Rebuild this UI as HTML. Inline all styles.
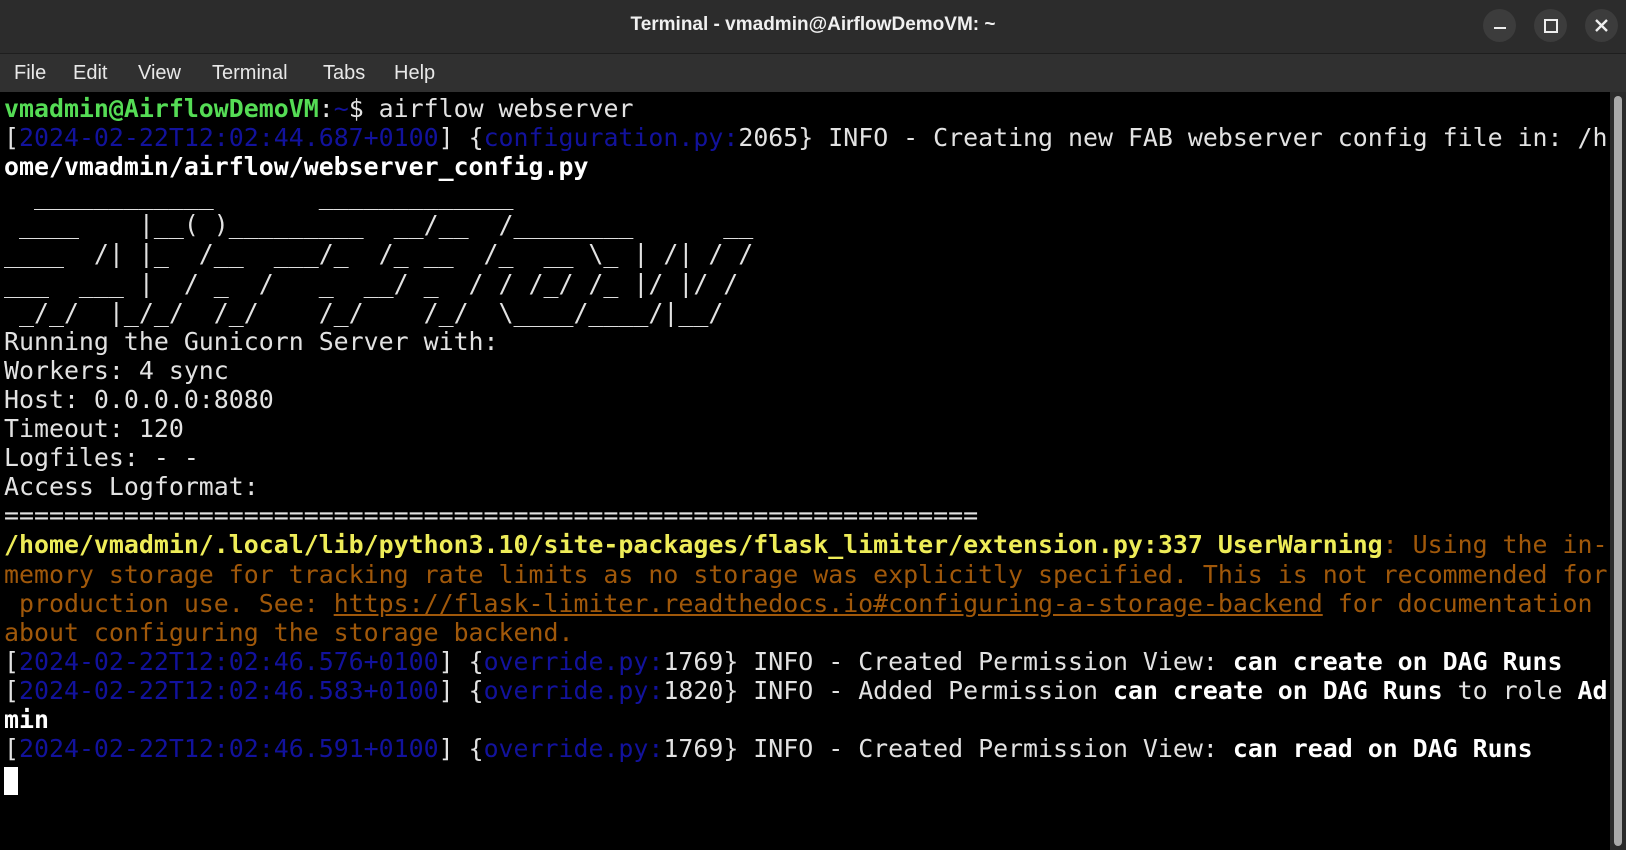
<!DOCTYPE html>
<html><head><meta charset="utf-8"><style>
html,body{margin:0;padding:0;width:1626px;height:850px;overflow:hidden;background:#000;}
.title{position:absolute;left:0;top:0;width:1626px;height:53px;background:#2c2c2c;border-bottom:1px solid #1e1e1e;}
.title .t{position:absolute;left:0;width:1626px;top:14px;text-align:center;color:#f0f0f0;font:bold 19px "Liberation Sans",sans-serif;}
.btn{position:absolute;top:9px;width:33px;height:33px;border-radius:50%;background:#3c3c3c;}
.menu{position:absolute;left:0;top:54px;width:1626px;height:38px;background:#303030;color:#e8e8e8;font:20px "Liberation Sans",sans-serif;}
.menu span{position:absolute;top:8px;}
.term{position:absolute;left:4px;top:94px;font-family:"DejaVu Sans Mono","Liberation Mono",monospace;font-size:24.9px;line-height:29.1px;color:#e2e2e2;white-space:pre;}
.g{color:#55dc55;font-weight:bold}.b{color:#12129c}.y{color:#eeec58;font-weight:bold}.o{color:#a0580a}.w{font-weight:bold;color:#fff}
.u{text-decoration:underline}
.sb{position:absolute;left:1610px;top:92px;width:16px;height:758px;background:#2a2a2a;}
.sb div{position:absolute;left:4px;top:4px;width:8px;height:750px;border-radius:4px;background:#a8a8a8;}
.cur{position:absolute;left:4px;top:767px;width:14px;height:28px;background:#fff;}
</style></head><body>
<div class="title"><div class="t">Terminal - vmadmin@AirflowDemoVM: ~</div>
<div class="btn" style="left:1483px"><div style="position:absolute;left:11px;top:18px;width:12px;height:2px;background:#eee"></div></div>
<div class="btn" style="left:1534px"><div style="position:absolute;left:10px;top:10px;width:10px;height:10px;border:2px solid #eee"></div></div>
<div class="btn" style="left:1585px"><svg width="33" height="33" style="position:absolute;left:0;top:0"><path d="M11 11L22 22M22 11L11 22" stroke="#eee" stroke-width="2.4"/></svg></div>
</div>
<div class="menu"><span style="left:14px">File</span><span style="left:73px">Edit</span><span style="left:138px">View</span><span style="left:212px">Terminal</span><span style="left:323px">Tabs</span><span style="left:394px">Help</span></div>
<div class="term"><span class="g">vmadmin@AirflowDemoVM</span>:<span class="b">~</span>$ airflow webserver
[<span class="b">2024-02-22T12:02:44.687+0100</span>] {<span class="b">configuration.py:</span>2065} INFO - Creating new FAB webserver config file in: /h
<span class="w">ome/vmadmin/airflow/webserver_config.py</span>
  ____________       _____________
 ____    |__( )_________  __/__  /________      __
____  /| |_  /__  ___/_  /_ __  /_  __ \_ | /| / /
___  ___ |  / _  /   _  __/ _  / / /_/ /_ |/ |/ /
 _/_/  |_/_/  /_/    /_/    /_/  \____/____/|__/
Running the Gunicorn Server with:
Workers: 4 sync
Host: 0.0.0.0:8080
Timeout: 120
Logfiles: - -
Access Logformat:
=================================================================
<span class="y">/home/vmadmin/.local/lib/python3.10/site-packages/flask_limiter/extension.py:337 UserWarning</span><span class="o">: Using the in-</span>
<span class="o">memory storage for tracking rate limits as no storage was explicitly specified. This is not recommended for</span>
<span class="o"> production use. See: <span class="u">https://flask-limiter.readthedocs.io#configuring-a-storage-backend</span> for documentation</span>
<span class="o">about configuring the storage backend.</span>
[<span class="b">2024-02-22T12:02:46.576+0100</span>] {<span class="b">override.py:</span>1769} INFO - Created Permission View: <span class="w">can create on DAG Runs</span>
[<span class="b">2024-02-22T12:02:46.583+0100</span>] {<span class="b">override.py:</span>1820} INFO - Added Permission <span class="w">can create on DAG Runs</span> to role <span class="w">Ad</span>
<span class="w">min</span>
[<span class="b">2024-02-22T12:02:46.591+0100</span>] {<span class="b">override.py:</span>1769} INFO - Created Permission View: <span class="w">can read on DAG Runs</span></div>
<div class="cur"></div>
<div class="sb"><div></div></div>
</body></html>
